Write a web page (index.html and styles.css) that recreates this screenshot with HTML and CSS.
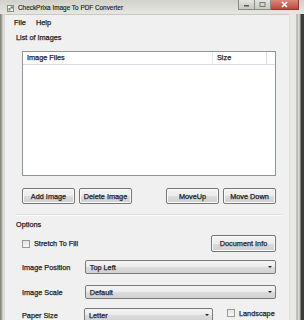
FILE: index.html
```html
<!DOCTYPE html>
<html lang="en">
<head>
    <meta charset="UTF-8">
    <meta name="viewport" content="width=device-width, initial-scale=1.0">
    <title>CheckPrixa Image To PDF Converter</title>
    <link rel="stylesheet" href="styles.css">
</head>
<body>
    <div class="window">
        <!-- Sarlavha qatori -->
        <div class="titlebar">
            <svg class="app-icon" width="8" height="8" viewBox="0 0 8 8">
                <rect x="0.5" y="1.5" width="6" height="6" fill="#f4f4f0" stroke="#8a8a80"/>
                <rect x="1.5" y="4" width="2" height="2.5" fill="#6a9a4a"/>
                <rect x="3.5" y="2.5" width="2.5" height="2" fill="#5a7fb8"/>
            </svg>
            <span class="title">CheckPrixa Image To PDF Converter</span>
            <div class="caption-buttons">
                <span class="cap-btn">
                    <svg width="15" height="9" viewBox="0 0 15 9"><rect x="5" y="5" width="5" height="1.5" fill="#555"/></svg>
                </span>
                <span class="cap-btn">
                    <svg width="15" height="9" viewBox="0 0 15 9"><rect x="5" y="2.5" width="5" height="4" fill="none" stroke="#777"/></svg>
                </span>
                <span class="cap-btn close">
                    <svg width="27" height="9" viewBox="0 0 27 9"><path d="M11 2 L16 7 M16 2 L11 7" stroke="#fff" stroke-width="1.6"/></svg>
                </span>
            </div>
        </div>

        <div class="client">
            <!-- Menyu -->
            <nav class="menubar">
                <span>File</span>
                <span>Help</span>
            </nav>

            <div class="group-label">List of Images</div>

            <div class="content">
                <div class="listview">
                    <div class="list-header">
                        <span class="col-name">Image Files</span>
                        <span class="col-size">Size</span>
                        <span class="col-rest"></span>
                    </div>
                </div>

                <div class="btn-row">
                    <div class="btn-group">
                        <button class="btn">Add Image</button>
                        <button class="btn">Delete Image</button>
                    </div>
                    <div class="btn-group">
                        <button class="btn">MoveUp</button>
                        <button class="btn">Move Down</button>
                    </div>
                </div>
            </div>

            <div class="separator"></div>

            <div class="group-label options-label">Options</div>

            <div class="content">
                <div class="option-row first">
                    <label class="check"><span class="box"></span>Stretch To Fill</label>
                    <button class="btn doc-btn">Document Info</button>
                </div>

                <div class="field-row">
                    <span class="field-label">Image Position</span>
                    <div class="combo wide">
                        <span>Top Left</span>
                        <span class="arrow"></span>
                    </div>
                </div>

                <div class="field-row">
                    <span class="field-label">Image Scale</span>
                    <div class="combo wide">
                        <span>Default</span>
                        <span class="arrow"></span>
                    </div>
                </div>

                <div class="field-row paper">
                    <span class="field-label">Paper Size</span>
                    <div class="combo short">
                        <span>Letter</span>
                        <span class="arrow"></span>
                    </div>
                    <label class="check landscape"><span class="box"></span>Landscape</label>
                </div>
            </div>
        </div>
    </div>
</body>
</html>
```

FILE: styles.css
```css
body {
    margin: 0;
    padding: 0;
    background: #5a5a54;
    font-family: 'Liberation Sans', Arial, sans-serif;
    font-size: 7.3px;
    color: #1e1e1e;
    -webkit-text-stroke: 0.25px #1e1e1e;
}

.window {
    width: 304px;
    height: 320px;
    overflow: hidden;
    background: linear-gradient(to right, #76766e 0px, #b4b4ac 2px, #dcdcd6 3px, #dcdcd6 289px, #e8e8e4 290px, #e8e8e4 296px, #9a9a94 297px, #dedeD8 298px, #c0c0ba 300px, #3c3c38 301px);
}

.titlebar {
    height: 14px;
    display: flex;
    align-items: flex-start;
    background: linear-gradient(#d2d2ca, #e6e6e2);
}

.app-icon {
    margin: 4px 0 0 7px;
}

.title {
    margin: 4px 0 0 3px;
    font-size: 6.4px;
    color: #222;
    -webkit-text-stroke: 0.15px #222;
}

.caption-buttons {
    display: flex;
    margin-left: auto;
    margin-right: 5px;
}

.cap-btn {
    display: block;
    height: 9px;
    border: 1px solid #8a8a84;
    border-top: none;
    background: linear-gradient(#e4e4e0, #c8c8c2);
    line-height: 0;
}

.cap-btn + .cap-btn {
    border-left: none;
}

.cap-btn.close {
    background: linear-gradient(#d88a7e, #c0463a);
    border-color: #8c3a32;
}

.client {
    margin: 0 15px 0 5px;
    height: 306px;
    background: #f0f0f0;
    border-top: 1px solid #c8c8c2;
}

.menubar {
    display: flex;
    gap: 10px;
    height: 15px;
    align-items: center;
    padding-left: 9px;
    font-size: 7.4px;
}

.group-label {
    margin: 2px 0 0 11px;
    height: 12px;
    line-height: 12px;
}

.content {
    width: 254px;
    margin-left: 17px;
}

.listview {
    margin-top: 7px;
    height: 123px;
    background: #fff;
    border: 1px solid #8e949c;
}

.list-header {
    display: flex;
    height: 12px;
    line-height: 12px;
    border-bottom: 1px solid #d8dce2;
}

.col-name {
    width: 185px;
    padding-left: 4px;
    border-right: 1px solid #ececec;
}

.col-size {
    width: 49px;
    padding-left: 4px;
    border-right: 1px solid #dcdcdc;
}

.col-rest {
    flex: 1;
}

.btn-row {
    display: flex;
    justify-content: space-between;
    margin-top: 12px;
}

.btn-group {
    display: flex;
    gap: 4px;
}

.btn {
    width: 53px;
    height: 16px;
    padding: 0;
    font-family: inherit;
    font-size: 7.3px;
    color: #1e1e1e;
    -webkit-text-stroke: 0.25px #1e1e1e;
    border: 1px solid #767676;
    border-radius: 2px;
    background: linear-gradient(#f4f4f4 0%, #ebebeb 50%, #dcdcdc 51%, #cfcfcf 100%);
    box-shadow: inset 0 0 0 1px #fafafa;
}

.separator {
    margin: 10px 7px 0 11px;
    height: 1px;
    background: #dedede;
    border-bottom: 1px solid #fbfbfb;
}

.options-label {
    margin-top: 3px;
}

.option-row {
    display: flex;
    align-items: center;
    justify-content: space-between;
    margin-top: 4px;
}

.doc-btn {
    width: 65px;
    height: 17px;
}

.check {
    display: flex;
    align-items: center;
    gap: 4px;
}

.box {
    width: 6px;
    height: 6px;
    border: 1px solid #9a9a9a;
    background: linear-gradient(#e4e4e4, #f6f6f6);
}

.field-row {
    display: flex;
    align-items: center;
    margin-top: 8px;
}

.field-row + .field-row {
    margin-top: 11px;
}

.field-row.paper {
    margin-top: 9px;
}

.field-label {
    width: 62px;
}

.combo {
    display: flex;
    align-items: center;
    justify-content: space-between;
    height: 12px;
    padding: 0 3px 0 4px;
    border: 1px solid #7a7a7a;
    border-radius: 2px;
    background: linear-gradient(#f4f4f4 0%, #ebebeb 50%, #dcdcdc 51%, #d2d2d2 100%);
}

.combo.wide {
    width: 183px;
    margin-left: 1px;
}

.combo.short {
    width: 120px;
}

.arrow {
    width: 0;
    height: 0;
    border-left: 2px solid transparent;
    border-right: 2px solid transparent;
    border-top: 2px solid #222;
}

.landscape {
    margin-left: 14px;
    margin-top: -4px;
}
```
